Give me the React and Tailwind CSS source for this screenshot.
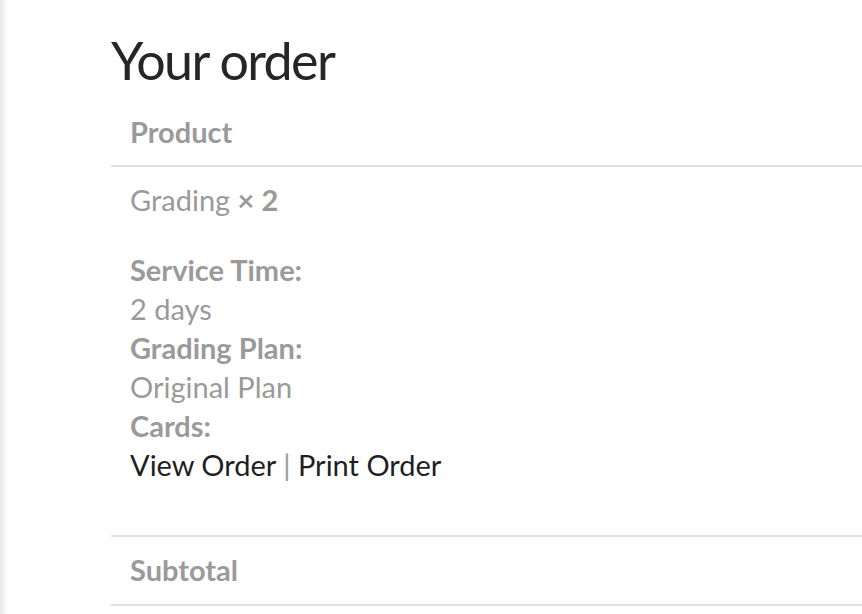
export default function App() {
  return (
    <div className="flex min-h-[614px] bg-white" style={{ fontFamily: 'Lato, "Noto Sans", sans-serif' }}>
      <div className="w-2 shrink-0 bg-gradient-to-r from-[#e6e6e6] to-white" />
      <div className="flex-1 pl-[103px]">
        <h1 className="pt-[29px] text-[52px] leading-[1.2] font-normal tracking-[-1.6px] text-[#262626]">Your order</h1>

        <div className="mt-[7px] border-b-2 border-[#e1e1e1] py-[14px] pl-[19px]">
          <div className="text-[29px] leading-[39px] font-bold text-[#9a9a9a]">Product</div>
        </div>

        <div className="border-b-2 border-[#e1e1e1] pt-[13px] pb-[51px] pl-[19px] text-[29px] leading-[39px] text-[#9a9a9a]">
          <div>
            Grading&nbsp;<strong className="font-bold">×&nbsp;2</strong>
          </div>
          <dl className="mt-[31px]">
            <dt className="font-bold">Service Time:</dt>
            <dd>2 days</dd>
            <dt className="font-bold">Grading Plan:</dt>
            <dd>Original Plan</dd>
            <dt className="font-bold">Cards:</dt>
            <dd className="text-[#1f1f1f]">
              <a>View Order</a> <span className="text-[#9a9a9a]">|</span> <a>Print Order</a>
            </dd>
          </dl>
        </div>

        <div className="border-b-2 border-[#e1e1e1] pt-[13px] pb-[15px] pl-[19px]">
          <div className="text-[29px] leading-[39px] font-bold text-[#9a9a9a]">Subtotal</div>
        </div>
      </div>
    </div>
  )
}
